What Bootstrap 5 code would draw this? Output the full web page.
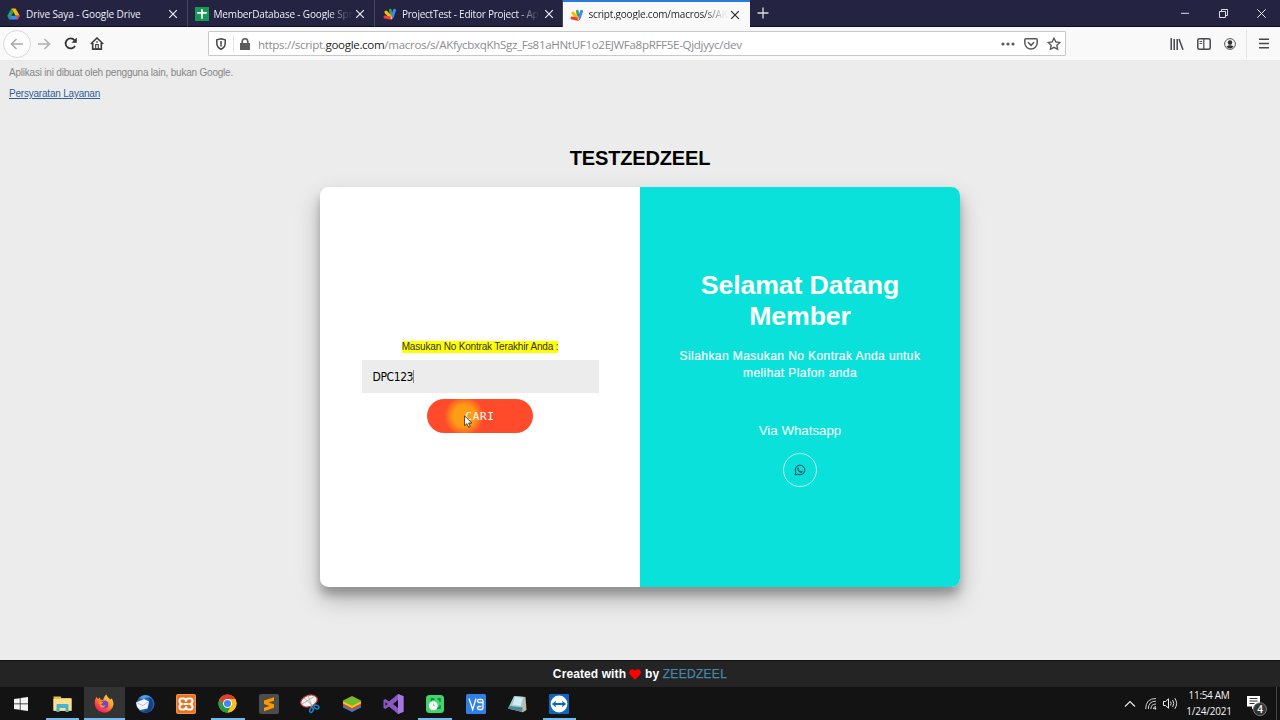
<!DOCTYPE html>
<html lang="id">
<head>
<meta charset="utf-8">
<title>TESTZEDZEEL</title>
<meta name="viewport" content="width=device-width, initial-scale=1">
<link href="https://cdn.jsdelivr.net/npm/bootstrap@5.3.0/dist/css/bootstrap.min.css" rel="stylesheet">
<style>
html,body{height:720px;overflow:hidden}
body{font-family:"Liberation Sans",Arial,sans-serif;background:#ececec;color:#000;line-height:1.2}
svg{display:block;flex:none}
.ui{font-family:"Open Sans","Noto Sans",sans-serif}
.tabbar{height:27px;background:#242442;border-bottom:1px solid #0c0c1c}
.tab{width:187.5px;height:27px;padding:1px 9px 0 7px;color:#ededf5;font-size:10px;border-right:1px solid #45455f}
.tab.current{background:#f9f9fa;color:#27272b;border-top:2px solid #2a7bdc;border-right:0;padding-top:0;padding-right:10px}
.tab.current .tab-title{position:relative;top:-1px}
.tab-title{white-space:nowrap;flex:1 1 0;min-width:0;margin-left:5px;letter-spacing:-.1px}
.fade-end{-webkit-mask-image:linear-gradient(90deg,#000 82%,rgba(0,0,0,.1) 95%);mask-image:linear-gradient(90deg,#000 82%,rgba(0,0,0,.1) 95%)}
.toolbar{height:34px;background:#f9f9fa;border-bottom:1px solid #e9e9ea;color:#3b3b3f}
.back{width:28px;height:28px;border:1px solid #d9d9d9;border-radius:50%;background:#fdfdfd}
.urlbox{width:858px;height:25px;border:1px solid #c9c9cb;border-radius:1px;background:#fff}
.urltext{font-size:11.6px;color:#8d8d91;white-space:nowrap;letter-spacing:-.34px;position:relative;top:1px}
.urltext b{font-weight:400;color:#1f1f22}
.page{height:599px;padding-top:6px}
.notice{font-size:10px;color:#868686;padding-left:9px;line-height:12px;letter-spacing:-.21px}
.notice a{color:#2d5f9a}
.heading{font-size:20px;font-weight:700;line-height:24px;letter-spacing:-.15px}
.panel{width:640px;height:400px;border-radius:8.5px;overflow:hidden;box-shadow:0 12px 23px rgba(0,0,0,.25),0 8px 8px rgba(0,0,0,.22);background:#fff}
.lookup-label{font-size:10px;line-height:12px;background:#ff0;color:#333;white-space:nowrap;letter-spacing:-.18px}
.lookup{width:237px;height:33px;background:#ececec;padding:1px 0 0 11px;font:12px "DejaVu Sans Condensed","DejaVu Sans",sans-serif;letter-spacing:-.4px}
.caret{width:1px;height:13px;background:#888}
.cari{width:106px;height:34px;border-radius:17px;background:radial-gradient(circle at 37px 17px,#ff9c14 0,#ff9a15 11px,#ff4b2b 20px);color:#fff;font:11px "DejaVu Sans Mono",monospace;letter-spacing:.7px;border:0;padding:2px 0 0}
.pointer{left:37px;top:16px}
.welcome{background:#09e1da;color:#fff}
.welcome h1{font-size:26.7px;line-height:31px;font-weight:700;margin:0;letter-spacing:-.13px}
.welcome p{font-size:12px;line-height:17px;margin:0;letter-spacing:.42px;-webkit-text-stroke:.2px #fff}
.wa{width:34px;height:34px;border:1px solid #c8f8f6;border-radius:50%}
.foot{height:27px;background:#242424;border-top:1px solid #151515;color:#fff;font-size:12px;font-weight:700;letter-spacing:.1px}
.foot a{color:#4487a8;font-weight:400;text-decoration:none;letter-spacing:.3px;-webkit-text-stroke:.25px #4487a8}
.taskbar{height:33px;background:#131313;color:#f2f2f2}
.app{width:41.4px;height:33px}
.app.open::after{content:"";position:absolute;left:4.5px;right:3.5px;bottom:0;height:2px;background:#76b9ed}
.app.focused{background:#333;left:1px}
.app.focused::after{left:0;right:0}
.clock{font-size:10px;line-height:15.5px;text-align:center;width:50px;letter-spacing:-.33px;white-space:nowrap}
</style>
</head>
<body>
<svg width="0" height="0" class="position-absolute">
<defs>
<symbol id="x" viewBox="0 0 10 10"><path d="M1.2 1.2l7.6 7.6M8.8 1.2L1.2 8.8" stroke="currentColor" stroke-width="1.2" fill="none"/></symbol>
<symbol id="script" viewBox="0 0 14 12"><path d="M7.300 2l1.200 7" stroke="#34a853" stroke-width="2.600" stroke-linecap="round"/><path d="M11.600 2.300L9 9.500" stroke="#4285f4" stroke-width="3" stroke-linecap="round"/><path d="M3 4.200L7.500 9" stroke="#fbbc04" stroke-width="3.200" stroke-linecap="round"/><path d="M2 9l6 1.200" stroke="#ea4335" stroke-width="3" stroke-linecap="round"/><circle cx="8.300" cy="10" r=".7" fill="#fff"/></symbol>
</defs>
</svg>

<div class="tabbar ui d-flex">
  <div class="tab d-flex align-items-center">
    <svg width="13" height="12" viewBox="0 0 13 12"><path d="M4.4.5h4.2l4.2 7.3H8.6z" fill="#fbbc04"/><path d="M4.4.5l2.1 3.7L2.2 11.5.2 7.8z" fill="#1fa463"/><path d="M4.3 7.8h8.5l-2.1 3.7H2.2z" fill="#4285f4"/><path d="M10.2 7.8h2.6l-2.1 3.7-2-3.7z" fill="#ea4335"/></svg>
    <span class="tab-title" style="margin-left:6px">Drive Saya - Google Drive</span>
    <svg width="10" height="10"><use href="#x"/></svg>
  </div>
  <div class="tab d-flex align-items-center">
    <svg width="14" height="14" viewBox="0 0 14 14"><path d="M0 0h14v14H0z" fill="#159957"/><path d="M7 2.200v9.600M2.200 5.800h9.600" stroke="#fff" stroke-width="1.8"/></svg>
    <span class="tab-title fade-end" style="letter-spacing:-.16px">MemberDatabase - Google Spr</span>
    <svg width="10" height="10"><use href="#x"/></svg>
  </div>
  <div class="tab d-flex align-items-center" style="padding-left:8px;padding-right:8px">
    <svg width="14" height="12"><use href="#script"/></svg>
    <span class="tab-title fade-end" style="letter-spacing:-.24px">ProjectTest - Editor Project - Ap</span>
    <svg width="10" height="10"><use href="#x"/></svg>
  </div>
  <div class="tab current d-flex align-items-center">
    <svg width="14" height="12"><use href="#script"/></svg>
    <span class="tab-title fade-end" style="letter-spacing:-.2px">script.google.com/macros/s/AK</span>
    <svg width="10" height="10"><use href="#x"/></svg>
  </div>
  <div class="d-flex align-items-center flex-grow-1 text-white">
    <svg style="margin-left:7px" width="12" height="12" viewBox="0 0 12 12"><path d="M6 .5v11M.5 6h11" stroke="#ddd" stroke-width="1.3"/></svg>
    <svg class="ms-auto" width="8" height="8" viewBox="0 0 8 8"><path d="M0 4.300h8" stroke="#ddd"/></svg>
    <svg style="margin-left:30px" width="9" height="9" viewBox="0 0 9 9"><path d="M.5 2.500h6v6h-6zM2.500 2.500v-2h6v6h-2" fill="none" stroke="#ddd"/></svg>
    <svg style="margin-left:29px;margin-right:14px" width="9" height="9" viewBox="0 0 9 9"><path d="M.3.3l8.400 8.400M8.700.3L.3 8.700" stroke="#eee" fill="none"/></svg>
  </div>
</div>

<div class="toolbar ui d-flex align-items-center">
  <div class="back d-flex align-items-center justify-content-center" style="margin-left:3px"><svg width="14" height="12" viewBox="0 0 14 12"><path d="M13 6H1.500M6.500 1l-5 5 5 5" fill="none" stroke="#aaa" stroke-width="1.5"/></svg></div>
  <svg style="margin-left:6px" width="14" height="12" viewBox="0 0 14 12"><path d="M1 6h11.500M7.500 1l5 5-5 5" fill="none" stroke="#b0b0b2" stroke-width="1.5"/></svg>
  <svg style="margin-left:13px" width="14" height="13" viewBox="0 0 14 13"><path d="M11 8.800A5 5 0 1 1 10.400 3.200" fill="none" stroke="#333" stroke-width="1.8"/><path d="M12.800.5v5.300H7.500z" fill="#333"/></svg>
  <svg style="margin-left:12px" width="14" height="13" viewBox="0 0 14 13"><path d="M.8 7L7 1l6.200 6M2.700 6v6.100h8.600V6" fill="none" stroke="#3b3b3f" stroke-width="1.6"/><path d="M5.700 7.500h2.600V12H5.700z" fill="none" stroke="#3b3b3f" stroke-width="1.1"/><path d="M6.300 4.200h1.500v1.500H6.300z" fill="#3b3b3f"/></svg>
  <div class="urlbox d-flex align-items-center" style="margin-left:104px">
    <svg style="margin-left:7px" width="10" height="12" viewBox="0 0 10 12"><path d="M5 .8l4.200 1v3.500c0 2.700-1.700 4.800-4.200 5.900C2.500 10.100.8 8 .8 5.300V1.800z" fill="none" stroke="#48484c" stroke-width="1.5"/><path d="M5 3v5.500" stroke="#48484c" stroke-width="1.5"/></svg>
    <div style="width:1px;height:17px;background:#e3e3e3;margin:0 6px 0 7px"></div>
    <svg width="10" height="12" viewBox="0 0 10 12"><path d="M0 5h10v7H0z" fill="#5c5c5f"/><path d="M2.200 6V3.500a2.800 2.800 0 0 1 5.600 0V6" fill="none" stroke="#5c5c5f" stroke-width="1.7"/></svg>
    <span class="urltext" style="margin-left:8px">https://script.<b>google.com</b>/macros/s/AKfycbxqKhSgz_Fs81aHNtUF1o2EJWFa8pRFF5E-Qjdjyyc/dev</span>
    <svg class="ms-auto" width="14" height="4" viewBox="0 0 14 4"><g fill="#5c5c5f"><circle cx="2" cy="2" r="1.6"/><circle cx="7" cy="2" r="1.6"/><circle cx="12" cy="2" r="1.6"/></g></svg>
    <svg style="margin-left:9px" width="14" height="12" viewBox="0 0 14 12"><path d="M1.800.8h10.400q1 0 1 1v3a6.200 6.200 0 0 1-12.400 0v-3q0-1 1-1z" fill="none" stroke="#58585b" stroke-width="1.5"/><path d="M4 4.300l3 3 3-3" fill="none" stroke="#58585b" stroke-width="1.6"/></svg>
    <svg style="margin-left:9px;margin-right:4px" width="14" height="14" viewBox="0 0 14 14"><path d="M7 1.200l1.800 3.700 4 .6-2.900 2.800.7 4L7 10.400l-3.600 1.900.7-4L1.200 5.500l4-.6z" fill="none" stroke="#58585b" stroke-width="1.4"/></svg>
  </div>
  <svg class="ms-auto" width="14" height="12" viewBox="0 0 14 12"><path d="M1.200 0v12M4.200 1v11M7.200 1v11M9 1l4 10.800" fill="none" stroke="#48484c" stroke-width="1.5"/></svg>
  <svg style="margin-left:13px" width="14" height="12" viewBox="0 0 14 12"><rect x=".8" y=".8" width="12.4" height="10.4" rx="1.5" fill="none" stroke="#48484c" stroke-width="1.5"/><path d="M6.800 1v10" stroke="#48484c" stroke-width="1.2"/><path d="M2.600 3.500h2.600M2.600 5.500h2.600" stroke="#48484c" stroke-width=".9"/></svg>
  <svg style="margin-left:13px" width="12" height="12" viewBox="0 0 12 12"><circle cx="6" cy="6" r="5.4" fill="none" stroke="#555"/><circle cx="6" cy="4.6" r="2.3" fill="#333"/><path d="M2.300 8.500q3.700-2.500 7.400 0Q6 12.500 2.300 8.500z" fill="#333"/></svg>
  <div style="width:1px;height:28px;background:#e2e2e3;margin:0 12px 0 10px"></div>
  <svg style="margin-right:11px" width="10" height="11" viewBox="0 0 10 11"><path d="M0 1.200h10M0 5.500h10M0 9.800h10" stroke="#48484c" stroke-width="1.5"/></svg>
</div>

<main class="page d-flex flex-column align-items-center">
  <div class="notice align-self-start">
    <div>Aplikasi ini dibuat oleh pengguna lain, bukan Google.</div>
    <a class="d-block" style="margin-top:9px" href="#">Persyaratan Layanan</a>
  </div>
  <h1 class="heading mb-0" style="margin-top:46px">TESTZEDZEEL</h1>
  <section class="panel d-flex" style="margin-top:16.5px">
    <form class="w-50 d-flex flex-column align-items-center" style="padding-top:154px">
      <label class="lookup-label">Masukan No Kontrak Terakhir Anda :</label>
      <div class="lookup d-flex align-items-center" style="margin-top:7px">DPC123<span class="caret"></span></div>
      <button type="button" class="cari position-relative" style="margin-top:6px">CARI
        <svg class="pointer position-absolute" width="9" height="13" viewBox="0 0 9 13"><path d="M.6.8v9.900l2.300-2.100 1.700 3.700 1.700-.8-1.700-3.500h3.200z" fill="#fff" stroke="#222" stroke-width=".8"/></svg>
      </button>
    </form>
    <div class="welcome w-50 d-flex flex-column align-items-center text-center" style="padding-top:83px">
      <h1>Selamat Datang<br>Member</h1>
      <p style="margin-top:16px">Silahkan Masukan No Kontrak Anda untuk<br>melihat Plafon anda</p>
      <div style="font-size:13.3px;line-height:16px;margin-top:41.4px">Via Whatsapp</div>
      <a class="wa d-flex align-items-center justify-content-center" style="margin-top:14px" href="#"><svg width="12" height="12" viewBox="0 0 12 12"><path d="M1 11l.8-2.700A4.800 4.800 0 1 1 3.700 10.200z" fill="none" stroke="#1c4548" stroke-width="1"/><path d="M4 3.200l1 1.500-.5.700q.7 1.500 2 2l.8-.6 1.400.8q-.2 1.300-1.500 1.200Q4 8.300 3.300 4.700q0-1 .7-1.500z" fill="#1c4548"/></svg></a>
    </div>
  </section>
</main>

<footer class="foot d-flex align-items-center justify-content-center">
  <span>Created with</span>
  <svg style="margin:0 4px 0 3px" width="12" height="11" viewBox="0 0 12 11"><path d="M6 10.800L1 5.700C-.8 3.500.6.3 3.200.3 4.500.3 5.500 1 6 1.900 6.500 1 7.500.3 8.800.3c2.600 0 4 3.200 2.200 5.400z" fill="#f00"/></svg>
  <span>by <a href="#">ZEEDZEEL</a></span>
</footer>

<div class="taskbar ui d-flex align-items-center">
  <div class="app d-flex align-items-center justify-content-center"><svg width="14" height="14" viewBox="0 0 14 14"><path d="M0 2l5.800-.8v5.400H0zM6.500 1.100L14 0v6.600H6.500zM0 7.300h5.800v5.400L0 12zM6.500 7.300H14V14l-7.500-1.100z" fill="#f5f5f5"/></svg></div>
  <div class="app open position-relative d-flex align-items-center justify-content-center"><svg width="19" height="16" viewBox="0 0 19 16"><path d="M.5.5h7l1 1.500h10v13H.5z" fill="#e9bd4f"/><path d="M.5 3h18v11.500H.5z" fill="#fbe08d"/><path d="M3.500 9q0-1 1-1h10q1 0 1 1v7h-3v-4h-6v4h-3z" fill="#45b5d4"/></svg></div>
  <div class="app open focused position-relative d-flex align-items-center justify-content-center"><svg width="20" height="20" viewBox="0 0 20 20"><defs><linearGradient id="ff" x1=".9" y1="0" x2=".2" y2="1"><stop offset="0" stop-color="#ffe83d"/><stop offset=".45" stop-color="#ff9324"/><stop offset=".75" stop-color="#ff3b47"/><stop offset="1" stop-color="#e5187b"/></linearGradient></defs><path d="M2.500 3l1.500 2 2-1.500.3 2L9 6c1-3 2-4.500 3.500-5.500 0 2 2 3 4 5 1-.3 1-.8 1-1.500 1.500 2.500 2 4.500 2 6.500A9.400 9.400 0 1 1 .8 8C1 6 1.500 4.500 2.500 3z" fill="url(#ff)"/><circle cx="10.300" cy="10.500" r="4" fill="#7643d0"/><path d="M4.500 8.500q2.500-1.500 5 .2-2.500.5-2.500 1.800 2 2 4.500.5Q10 15 6.500 13z" fill="#ff9b20"/></svg></div>
  <div class="app d-flex align-items-center justify-content-center"><svg width="20" height="20" viewBox="0 0 20 20"><circle cx="10.500" cy="10" r="9" fill="#2464bd"/><path d="M4 4Q10-2 17 4q-5-2-8 1z" fill="#4ba1ea"/><path d="M14 3q6 5 3 12-4 5-10 3 9-2 7-15z" fill="#17407f"/><path d="M1 8.500L9 5l5 2.500-1.500 7L5 16 2 13z" fill="#f4f8fc"/><path d="M1 8.500l7 3 6-4" stroke="#abc6df" fill="none"/></svg></div>
  <div class="app d-flex align-items-center justify-content-center"><svg width="20" height="20" viewBox="0 0 20 20"><rect width="20" height="20" rx="2" fill="#e8711d"/><rect x=".7" y=".7" width="18.6" height="18.6" rx="1.5" fill="none" stroke="#f5a365" stroke-width=".8"/><path d="M5.500 4.500h2q2.500 0 2.500 2.500 0-2.500 2.500-2.500h2q2 0 2 2.500t-2.500 3q2.500.5 2.500 3t-2 2.500h-2Q10 15.500 10 13q0 2.500-2.500 2.500h-2q-2 0-2-2.500T6 10Q3.500 9.500 3.500 7t2-2.500zM7.500 10h5" fill="none" stroke="#fff" stroke-width="2.1" stroke-linejoin="round"/></svg></div>
  <div class="app open position-relative d-flex align-items-center justify-content-center"><svg width="19" height="19" viewBox="0 0 20 20"><circle cx="10" cy="10" r="9.500" fill="#fbc116"/><path d="M1.800 5.200A9.500 9.500 0 0 1 18.300 5.400H10L6 12.300z" fill="#e33b2e"/><path d="M1.800 5.200A9.500 9.500 0 0 0 10 19.500l4-7.300H6z" fill="#269b49"/><path d="M10 5.400h8.300A9.500 9.500 0 0 1 10 19.500l4.200-7.200z" fill="#fbc116"/><circle cx="10" cy="10" r="4.700" fill="#fff"/><circle cx="10" cy="10" r="3.700" fill="#4285f4"/></svg></div>
  <div class="app d-flex align-items-center justify-content-center"><svg width="20" height="20" viewBox="0 0 20 20"><rect width="20" height="20" rx="2" fill="#4c4c4c"/><path d="M15 3.200v3.500L9.500 8.600 15 10.300v3.500L5 17.200v-3.500l5.500-1.800L5 10.100V6.500z" fill="#ff9800"/></svg></div>
  <div class="app d-flex align-items-center justify-content-center"><svg width="20" height="20" viewBox="0 0 20 20"><ellipse cx="9" cy="7" rx="8.500" ry="5.600" transform="rotate(-20 9 7)" fill="#f5f1f1" stroke="#c53b3b" stroke-width="1.2"/><path d="M2 10l13-8M8 1l4 12M4 4l9 8" stroke="#aaa" stroke-width=".9"/><g fill="none" stroke="#1686cf" stroke-width="1.5"><ellipse cx="11.500" cy="16" rx="1.700" ry="2.500" transform="rotate(20 11.500 16)"/><ellipse cx="16.500" cy="13" rx="2.500" ry="1.700" transform="rotate(20 16.500 13)"/></g></svg></div>
  <div class="app d-flex align-items-center justify-content-center"><svg width="20" height="18" viewBox="0 0 20 18"><path d="M1 10.500l9-4 9 4v2l-9 4.500-9-4.500z" fill="#2789cc"/><path d="M1 8.500l9-4 9 4v2l-9 4.500-9-4.500z" fill="#e83b32"/><path d="M1 6.500l9-4 9 4v2L10 13 1 8.500z" fill="#f6cb18"/><path d="M1 5.500L10 1l9 4.500v1L10 11 1 6.500z" fill="#79b82a"/></svg></div>
  <div class="app d-flex align-items-center justify-content-center"><svg width="21" height="20" viewBox="0 0 21 20"><path d="M15 0l5.500 2.200v15.600L15 20l-9-7.500L2.500 15 .5 14V6l2-1L6 7.500zM15 6l-5 4 5 4zM2.500 8v4l2-2z" fill="#8658c6" fill-rule="evenodd"/><path d="M15 0l5.500 2.200v15.600L15 20z" fill="#a876e0"/></svg></div>
  <div class="app open position-relative d-flex align-items-center justify-content-center"><svg width="18" height="18" viewBox="0 0 18 18"><rect width="18" height="18" rx="3.500" fill="#42d56e"/><path d="M5.500 6V4h3M11.500 4H14v3M14 10v3h-3" fill="none" stroke="#137c36" stroke-width="1.3"/><circle cx="7.300" cy="10.700" r="4.500" fill="#f8fffa"/><path d="M7.500 8.500v2.300H9" fill="none" stroke="#8fb89b" stroke-width=".8"/></svg></div>
  <div class="app d-flex align-items-center justify-content-center"><svg width="20" height="20" viewBox="0 0 20 20"><rect width="20" height="20" rx="1.500" fill="#2f7fe6"/><path d="M3 4.500l3.700 11 3.300-11M17 8.500h-4q-1.500 0-1.500-1.500t1.500-1.500h2.500q1.500 0 1.500 1.500v7q0 1.500-1.500 1.500H13q-1.500 0-1.500-1.500T13 12.500h2.500" fill="none" stroke="#fff" stroke-width="1.300"/></svg></div>
  <div class="app d-flex align-items-center justify-content-center"><svg width="19" height="18" viewBox="0 0 19 18"><path d="M6 1l11.500 1L18.500 15l-4 2.500z" fill="#c5b9a6"/><path d="M6 1l10.500 1-2.500 15L0 13.500z" fill="#9acbd3"/><path d="M1.500 11l13.300 1.500L14 17 0 13.500z" fill="#508994"/><path d="M7 2l8 .8-2.500 8.200-8-1z" fill="#d2ebee"/></svg></div>
  <div class="app open position-relative d-flex align-items-center justify-content-center"><svg width="20" height="20" viewBox="0 0 20 20"><rect width="20" height="20" rx="1" fill="#1065c2"/><circle cx="10" cy="10" r="8.400" fill="#fff"/><path d="M2.800 10L7 6.800l-.5 2.300h7L13 6.800l4.200 3.200-4.200 3.200.5-2.300h-7l.5 2.300z" fill="#0c65c0"/></svg></div>

  <svg class="ms-auto" width="12" height="8" viewBox="0 0 12 8"><path d="M1 6.500l5-5 5 5" fill="none" stroke="#eee" stroke-width="1.1"/></svg>
  <svg style="margin-left:9px" width="12" height="13" viewBox="0 0 12 13"><g fill="none" stroke="#ccc" stroke-width="1"><path d="M.7 12Q.7 1.500 11 1.500M3.300 12Q3.300 4.200 11 4.200M5.900 12Q5.900 7 11 7"/><path d="M8.400 12Q8.400 9.500 11 9.500"/></g><circle cx="10.300" cy="11.500" r="1" fill="#eee"/></svg>
  <svg style="margin-left:6px" width="15" height="13" viewBox="0 0 15 13"><path d="M.5 4.500h2l3-2.700v9.400l-3-2.700h-2z" fill="none" stroke="#eee"/><path d="M7.500 4.500q1.300 2 0 4M9.600 3q2.400 3.500 0 7M11.800 1.200q3.600 5.300 0 10.600" fill="none" stroke="#ddd"/></svg>
  <div class="clock" style="margin-left:6px"><div>11:54 AM</div><div style="letter-spacing:-.2px">1/24/2021</div></div>
  <svg style="margin-left:12px;margin-right:12px" width="24" height="24" viewBox="0 0 24 24"><path d="M1 4h13v10.500H9l-3 3v-3H1z" fill="#fff"/><path d="M3.500 6.500h8M3.500 9h8M3.500 11.500h5" stroke="#333"/><circle cx="14" cy="17.200" r="6.500" fill="#363636" stroke="#888" stroke-width=".8"/><text x="14" y="20.800" font-size="10" font-weight="600" text-anchor="middle" fill="#fff">4</text></svg>
  <div style="width:1px;height:33px;background:#444;margin-left:-6px;margin-right:3px"></div>
</div>
<script src="https://cdn.jsdelivr.net/npm/bootstrap@5.3.0/dist/js/bootstrap.bundle.min.js"></script>
</body>
</html>
